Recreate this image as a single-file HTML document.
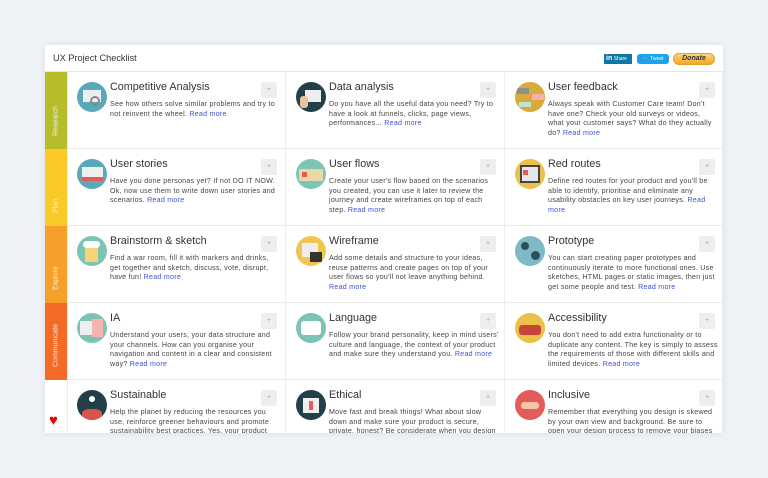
<!DOCTYPE html>
<html><head><meta charset="utf-8"><style>
*{margin:0;padding:0;box-sizing:border-box}
body{width:768px;height:478px;background:#eef1f6;font-family:"Liberation Sans",sans-serif;position:relative;overflow:hidden}
.card{position:absolute;left:45px;top:45px;width:678px;height:388px;background:#fff;box-shadow:0 0 6px rgba(0,0,0,.08);overflow:hidden}
.hdr{position:absolute;left:0;top:0;width:678px;height:27px;border-bottom:1px solid #e6e6e6}
.hdr .t{position:absolute;left:8px;top:8px;font-size:9.2px;color:#333}
.side{position:absolute;left:0;width:22px}
.side span{position:absolute;left:50%;bottom:6px;transform-origin:0 0;transform:rotate(-90deg) translate(0,-50%);color:#fff;font-size:7px;white-space:nowrap;opacity:.85}
.cell{position:absolute;width:219px;height:77px;border-right:1px solid #ececec;border-bottom:1px solid #ececec}
.ic{position:absolute;left:10px;top:10px;width:30px;height:30px;border-radius:50%;overflow:hidden}
.ic i{position:absolute;display:block}
.ti{position:absolute;left:43px;top:9px;font-size:10.8px;color:#333}
.tx{position:absolute;left:43px;top:28px;width:170px;font-size:7.1px;line-height:9.6px;color:#444;letter-spacing:.25px}
.tx a{color:#3d52d5;text-decoration:none}
.pl{position:absolute;left:194px;top:10px;width:16px;height:16px;background:#eee;border-radius:2px;font-size:7px;color:#aaa;text-align:center;line-height:16px}
</style></head><body>
<div class="card">
<div class="hdr"><div class="t">UX Project Checklist</div>
<div style="position:absolute;left:559px;top:9px;width:28px;height:10px;background:#0e76a8;color:#fff;font-size:5px;line-height:10px;padding-left:2px"><b style="font-size:7px">in</b> Share</div>
<div style="position:absolute;left:592px;top:9px;width:32px;height:10px;background:#1da1f2;color:#fff;font-size:5px;line-height:10px;text-align:center;border-radius:3px">🐦 Tweet</div>
<div style="position:absolute;left:628px;top:8px;width:42px;height:12px;background:linear-gradient(#ffd57a,#f5a623);border:1px solid #e0a030;border-radius:6px;color:#333;font-size:7px;font-style:italic;font-weight:bold;line-height:10px;text-align:center">Donate</div>
</div>
<div class="side" style="top:27px;height:77px;background:#b6bd2b"><span>Research</span></div>
<div class="side" style="top:104px;height:77px;background:#fbc928"><span>Plan</span></div>
<div class="side" style="top:181px;height:77px;background:#f6a02b"><span>Explore</span></div>
<div class="side" style="top:258px;height:77px;background:#f26a24"><span>Communicate</span></div>
<div style="position:absolute;left:4px;top:368px;color:#e00;font-size:15px;line-height:15px">♥</div>
<div style="position:absolute;left:22px;top:27px;width:1px;height:361px;background:#ececec"></div>

<div class="cell" style="left:22px;top:27px"><div class="ic" style="background:#5aa9b8"><i style="left:6px;top:8px;width:18px;height:12px;background:#e9eef0"></i><i style="left:13px;top:14px;width:10px;height:10px;border-radius:50%;border:2px solid #888"></i></div><div class="ti">Competitive Analysis</div><div class="tx">See how others solve similar problems and try to not reinvent the wheel. <a>Read more</a></div><div class="pl">+</div></div>
<div class="cell" style="left:241px;top:27px"><div class="ic" style="background:#23404a"><i style="left:9px;top:8px;width:16px;height:12px;background:#eee"></i><i style="left:4px;top:14px;width:8px;height:12px;background:#e8c39d;border-radius:3px"></i></div><div class="ti">Data analysis</div><div class="tx">Do you have all the useful data you need? Try to have a look at funnels, clicks, page views, performances... <a>Read more</a></div><div class="pl">+</div></div>
<div class="cell" style="left:460px;top:27px;width:218px"><div class="ic" style="background:#d9a93a"><i style="left:2px;top:6px;width:12px;height:6px;background:#8a8f95"></i><i style="left:17px;top:12px;width:12px;height:6px;background:#f3b0ac"></i><i style="left:4px;top:20px;width:12px;height:5px;background:#bfe2d6"></i></div><div class="ti">User feedback</div><div class="tx">Always speak with Customer Care team! Don't have one? Check your old surveys or videos, what your customer says? What do they actually do? <a>Read more</a></div><div class="pl">+</div></div>

<div class="cell" style="left:22px;top:104px"><div class="ic" style="background:#5aa9b8"><i style="left:5px;top:8px;width:21px;height:14px;background:#eef0f0"></i><i style="left:5px;top:18px;width:21px;height:4px;background:#e35b5b"></i></div><div class="ti">User stories</div><div class="tx">Have you done personas yet? If not DO IT NOW. Ok, now use them to write down user stories and scenarios. <a>Read more</a></div><div class="pl">+</div></div>
<div class="cell" style="left:241px;top:104px"><div class="ic" style="background:#7cc4b3"><i style="left:3px;top:10px;width:24px;height:12px;background:#e8d9a8"></i><i style="left:6px;top:13px;width:5px;height:5px;background:#e35b5b"></i></div><div class="ti">User flows</div><div class="tx">Create your user's flow based on the scenarios you created, you can use it later to review the journey and create wireframes on top of each step. <a>Read more</a></div><div class="pl">+</div></div>
<div class="cell" style="left:460px;top:104px;width:218px"><div class="ic" style="background:#ecc14a"><i style="left:5px;top:6px;width:20px;height:18px;background:#e6e6e6;border:2px solid #444"></i><i style="left:8px;top:11px;width:5px;height:5px;background:#e35b5b"></i></div><div class="ti">Red routes</div><div class="tx">Define red routes for your product and you'll be able to identify, prioritise and eliminate any usability obstacles on key user journeys. <a>Read more</a></div><div class="pl">+</div></div>

<div class="cell" style="left:22px;top:181px"><div class="ic" style="background:#7cc4b3"><i style="left:8px;top:10px;width:13px;height:16px;background:#f6d374"></i><i style="left:6px;top:5px;width:17px;height:7px;background:#fff;border-radius:4px"></i></div><div class="ti">Brainstorm &amp; sketch</div><div class="tx">Find a war room, fill it with markers and drinks, get together and sketch, discuss, vote, disrupt, have fun! <a>Read more</a></div><div class="pl">+</div></div>
<div class="cell" style="left:241px;top:181px"><div class="ic" style="background:#f0c651"><i style="left:6px;top:7px;width:16px;height:14px;background:#eee"></i><i style="left:14px;top:16px;width:12px;height:10px;background:#333"></i></div><div class="ti">Wireframe</div><div class="tx">Add some details and structure to your ideas, reuse patterns and create pages on top of your user flows so you'll not leave anything behind. <a>Read more</a></div><div class="pl">+</div></div>
<div class="cell" style="left:460px;top:181px;width:218px"><div class="ic" style="background:#7fb9c6"><i style="left:6px;top:6px;width:8px;height:8px;border-radius:50%;background:#2f4e58"></i><i style="left:16px;top:15px;width:9px;height:9px;border-radius:50%;background:#2f4e58"></i></div><div class="ti">Prototype</div><div class="tx">You can start creating paper prototypes and continuously iterate to more functional ones. Use sketches, HTML pages or static images, then just get some people and test. <a>Read more</a></div><div class="pl">+</div></div>

<div class="cell" style="left:22px;top:258px"><div class="ic" style="background:#7cc4b3"><i style="left:3px;top:8px;width:12px;height:14px;background:#eee"></i><i style="left:15px;top:6px;width:11px;height:18px;background:#f4b4b0"></i></div><div class="ti">IA</div><div class="tx">Understand your users, your data structure and your channels. How can you organise your navigation and content in a clear and consistent way? <a>Read more</a></div><div class="pl">+</div></div>
<div class="cell" style="left:241px;top:258px"><div class="ic" style="background:#7cc4b3"><i style="left:5px;top:8px;width:20px;height:14px;background:#fff;border-radius:3px"></i></div><div class="ti">Language</div><div class="tx">Follow your brand personality, keep in mind users' culture and language, the context of your product and make sure they understand you. <a>Read more</a></div><div class="pl">+</div></div>
<div class="cell" style="left:460px;top:258px;width:218px"><div class="ic" style="background:#ecc14a"><i style="left:4px;top:12px;width:22px;height:10px;background:#c8433a;border-radius:3px"></i></div><div class="ti">Accessibility</div><div class="tx">You don't need to add extra functionality or to duplicate any content. The key is simply to assess the requirements of those with different skills and limited devices. <a>Read more</a></div><div class="pl">+</div></div>

<div class="cell" style="left:22px;top:335px"><div class="ic" style="background:#23404a"><i style="left:5px;top:19px;width:20px;height:11px;background:#d9534f;border-radius:40%"></i><i style="left:12px;top:6px;width:6px;height:6px;background:#fff;border-radius:50%"></i></div><div class="ti">Sustainable</div><div class="tx">Help the planet by reducing the resources you use, reinforce greener behaviours and promote sustainability best practices. Yes, your product</div><div class="pl">+</div></div>
<div class="cell" style="left:241px;top:335px"><div class="ic" style="background:#23404a"><i style="left:7px;top:8px;width:16px;height:15px;background:#eee"></i><i style="left:13px;top:11px;width:4px;height:9px;background:#e35b5b"></i></div><div class="ti">Ethical</div><div class="tx">Move fast and break things! What about slow down and make sure your product is secure, private, honest? Be considerate when you design</div><div class="pl">+</div></div>
<div class="cell" style="left:460px;top:335px;width:218px"><div class="ic" style="background:#e35b5b"><i style="left:6px;top:12px;width:18px;height:7px;background:#f3c6a5;border-radius:3px"></i></div><div class="ti">Inclusive</div><div class="tx">Remember that everything you design is skewed by your own view and background. Be sure to open your design process to remove your biases</div><div class="pl">+</div></div>
</div>
</body></html>
